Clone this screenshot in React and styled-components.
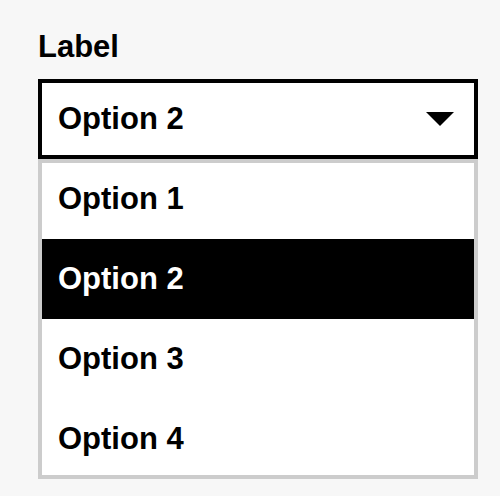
import styled, { createGlobalStyle } from "styled-components";

const GlobalStyle = createGlobalStyle`
  html, body {
    margin: 0;
    padding: 0;
    background-color: #f7f7f7;
  }
  body {
    font-family: "Liberation Sans", Arial, Helvetica, sans-serif;
    color: #000;
  }
`;

const Wrapper = styled.div`
  display: flex;
  flex-direction: column;
  box-sizing: border-box;
  padding: 29px 0 0 38px;
  width: 478px;
`;
const Label = styled.label`
  font-size: 31px;
  line-height: 36px;
  font-weight: 700;
  margin-bottom: 14px;
`;
const SelectBox = styled.div`
  position: relative;
  z-index: 1;
  box-sizing: border-box;
  width: 440px;
  height: 80px;
  border: 4px solid #000;
  background-color: #fff;
  display: flex;
  align-items: center;
  justify-content: space-between;
  padding: 0 20px 0 16px;
  font-size: 31px;
  font-weight: 700;
`;
const Arrow = styled.svg`
  width: 28px;
  height: 14px;
  display: block;
`;
const List = styled.ul`
  list-style: none;
  margin: 0;
  padding: 0;
  box-sizing: border-box;
  width: 440px;
  border: 4px solid #ccc;
  background-color: #fff;
  display: flex;
  flex-direction: column;
`;
const Item = styled.li`
  height: 80px;
  box-sizing: border-box;
  display: flex;
  align-items: center;
  padding-left: 16px;
  font-size: 31px;
  font-weight: 700;
  background-color: ${(p) => (p.$selected ? "#000" : "transparent")};
  color: ${(p) => (p.$selected ? "#fff" : "#000")};

  &:first-child {
    margin-top: -4px;
  }
  &:last-child {
    margin-bottom: -4px;
  }
`;

const options = ["Option 1", "Option 2", "Option 3", "Option 4"];

const App = () => {
  const selected = "Option 2";
  return (
    <>
      <GlobalStyle />
      <Wrapper>
        <Label>Label</Label>
        <SelectBox>
          <span>{selected}</span>
          <Arrow viewBox="0 0 28 14">
            <polygon points="0,0 28,0 14,14" fill="#000" />
          </Arrow>
        </SelectBox>
        <List>
          {options.map((o) => (
            <Item key={o} $selected={o === selected}>
              {o}
            </Item>
          ))}
        </List>
      </Wrapper>
    </>
  );
};
export default App;
